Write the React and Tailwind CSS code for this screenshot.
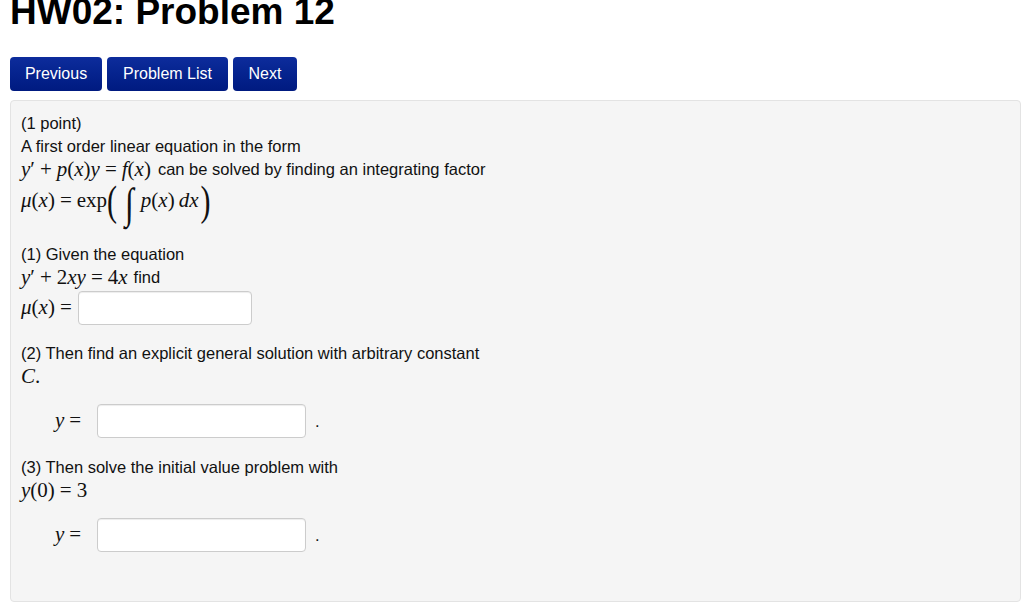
import React from "react";

const sans = "font-['Liberation_Sans',Arial,sans-serif]";
const serif = "font-['Liberation_Serif','Times_New_Roman',serif]";

function M({ children, className = "" }) {
  return <span className={`${serif} text-[21px] whitespace-nowrap ${className}`}>{children}</span>;
}

function I({ children }) {
  return <i className="italic">{children}</i>;
}

function Op({ children }) {
  return <span className="mx-[5px]">{children}</span>;
}

function NavButton({ children, className = "" }) {
  return (
    <button
      type="button"
      className={`h-[34px] rounded-[4px] bg-linear-to-b from-[#0d2c9c] to-[#001a80] text-white text-[16px] ${sans} ${className}`}
    >
      {children}
    </button>
  );
}

function Answer({ className = "" }) {
  return (
    <input
      type="text"
      className={`h-[34px] rounded-[4px] border border-[#cccccc] bg-white shadow-[inset_0_1px_1px_rgba(0,0,0,0.075)] outline-none ${className}`}
    />
  );
}

export default function App() {
  return (
    <div className={`min-h-[609px] bg-white text-black ${sans} overflow-hidden`}>
      <h1 className="ml-[10px] mt-[-6px] text-[37px] leading-[36px] font-bold">
        HW02: Problem 12
      </h1>

      <div className="ml-[10px] mt-[27px] flex gap-[5px]">
        <NavButton className="w-[92px]">Previous</NavButton>
        <NavButton className="w-[121px]">Problem List</NavButton>
        <NavButton className="w-[64px]">Next</NavButton>
      </div>

      <div className="ml-[10px] mt-[9px] h-[502px] w-[1011px] rounded-[4px] border border-[#e3e3e3] bg-[#f5f5f5] px-[10px] pt-[11px] text-[16.5px] text-[#111]">
        <div className="h-[23px] leading-[23px]">(1 point)</div>
        <div className="h-[23px] leading-[23px]">A first order linear equation in the form</div>
        <div className="h-[23px] leading-[23px] flex items-center gap-[7px]">
          <M>
            <I>y</I>′<Op>+</Op><I>p</I>(<I>x</I>)<I>y</I><Op>=</Op><I>f</I>(<I>x</I>)
          </M>
          <span>can be solved by finding an integrating factor</span>
        </div>
        <div className="h-[40px] flex items-center">
          <M>
            <I>μ</I>(<I>x</I>)<Op>=</Op>exp
          </M>
          <span className={`${serif} text-[30px] leading-none inline-block scale-y-[1.4]`}>(</span>
          <span className={`${serif} text-[32px] leading-none italic ml-[8px] mr-[7px] inline-block scale-y-[1.35] relative top-[2px]`}>∫</span>
          <M>
            <I>p</I>(<I>x</I>)<span className="ml-[4px]"><I>dx</I></span>
          </M>
          <span className={`${serif} text-[30px] leading-none inline-block scale-y-[1.4] ml-[2px]`}>)</span>
        </div>

        <div className="mt-[22px] h-[23px] leading-[23px]">(1) Given the equation</div>
        <div className="h-[23px] leading-[23px] flex items-center gap-[6px]">
          <M>
            <I>y</I>′<Op>+</Op>2<I>xy</I><Op>=</Op>4<I>x</I>
          </M>
          <span>find</span>
        </div>
        <div className="h-[37px] flex items-center gap-[1px]">
          <M>
            <I>μ</I>(<I>x</I>)<Op>=</Op>
          </M>
          <Answer className="w-[174px]" />
        </div>

        <div className="mt-[16px] h-[23px] leading-[23px]">
          (2) Then find an explicit general solution with arbitrary constant
        </div>
        <div className="h-[23px] leading-[23px]">
          <M>
            <I>C</I>.
          </M>
        </div>
        <div className="mt-[14px] h-[38px] flex items-center pl-[34px]">
          <M className="w-[42px]">
            <I>y</I>
            <Op>=</Op>
          </M>
          <Answer className="w-[209px]" />
          <span className="ml-[9px]">.</span>
        </div>

        <div className="mt-[16px] h-[23px] leading-[23px]">
          (3) Then solve the initial value problem with
        </div>
        <div className="h-[23px] leading-[23px]">
          <M>
            <I>y</I>(0)<Op>=</Op>3
          </M>
        </div>
        <div className="mt-[14px] h-[38px] flex items-center pl-[34px]">
          <M className="w-[42px]">
            <I>y</I>
            <Op>=</Op>
          </M>
          <Answer className="w-[209px]" />
          <span className="ml-[9px]">.</span>
        </div>
      </div>
    </div>
  );
}
